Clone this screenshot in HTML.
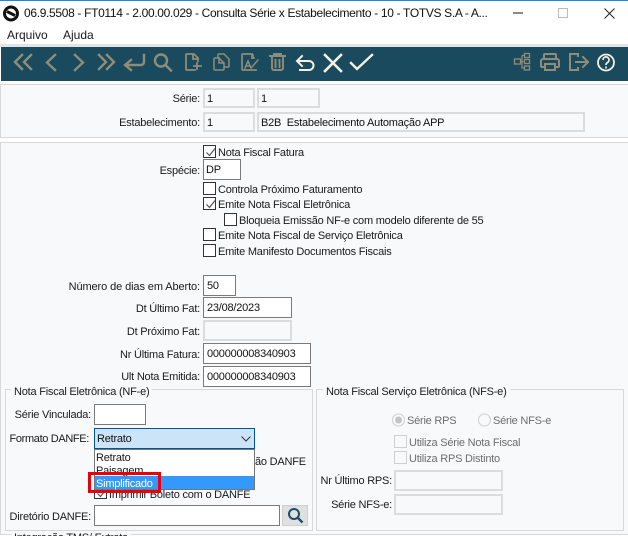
<!DOCTYPE html>
<html lang="pt"><head><meta charset="utf-8"><title>Consulta Série x Estabelecimento</title>
<style>
html,body{margin:0;padding:0;width:628px;height:536px;overflow:hidden;background:#fff}
#w{width:628px;height:536px;position:relative;overflow:hidden;background:#fff;font:11px "Liberation Sans",sans-serif;letter-spacing:-.22px;color:#1a1a1a}
.a{position:absolute;box-sizing:border-box}
.t{position:absolute;white-space:nowrap;line-height:14px;height:14px;margin-top:1px}
.r{text-align:right}
.f{position:absolute;box-sizing:border-box;background:#fff;border:1px solid #7a7a7a;padding:0 3px;line-height:20px;white-space:nowrap;overflow:hidden;color:#111}
.d{background:#f8f9fb;border:2px solid #dcdcdc;padding:0 2px;line-height:18px}
.c{position:absolute;box-sizing:border-box;width:13px;height:13px;border:1px solid #333;background:#fff}
.c.g{border-color:#cfcfcf;background:#f8f9fb}
.c svg{position:absolute;left:1px;top:1px}
.g1{color:#6d6d6d}
svg.i{position:absolute;left:0;top:0}
</style></head><body><div id="w">
<div class="a" style="left:0;top:0;width:628px;height:1px;background:#1e88d8"></div>
<svg class="i" width="24" height="26"><circle cx="11" cy="13.500" r="6.500" fill="none" stroke="#111" stroke-width="3"/><path d="M7 11.500l8 4" stroke="#111" stroke-width="3"/></svg>
<div class="t" style="left:24px;top:6px;margin-top:0;letter-spacing:-.33px;font-size:12px;color:#111">06.9.5508 - FT0114 - 2.00.00.029 - Consulta Série x Estabelecimento - 10 - TOTVS S.A - A...</div>
<svg class="i" width="628" height="30"><path d="M513 13h10" stroke="#111" stroke-width="1"/><rect x="558.500" y="8.500" width="9" height="9" fill="none" stroke="#bbb"/><path d="M604.500 8.500l10 10m0-10l-10 10" stroke="#222"/></svg>
<div class="t" style="left:7px;top:28px;margin-top:0;font-size:12px;letter-spacing:0">Arquivo</div>
<div class="t" style="left:63px;top:28px;margin-top:0;font-size:12px;letter-spacing:0">Ajuda</div>
<div class="a" style="left:0;top:44px;width:628px;height:3px;background:#e4e4e4"></div>
<div class="a" style="left:1px;top:47px;width:627px;height:34px;background:#194a5e"></div>
<svg class="i" width="628" height="84" fill="none" stroke-linecap="square">
<g stroke="#8f8d78" stroke-width="2.400">
<path d="M22 55l-7 7 7 7M31 55l-7 7 7 7"/>
<path d="M55 55l-8 7.500 8 7.500"/>
<path d="M75 55l8 7.500-8 7.500"/>
<path d="M99 55l7 7-7 7M107 55l7 7-7 7"/>
<path d="M144 55v7a3 3 0 0 1-3 3h-15M131 60l-6 5 6 5"/>
<circle cx="161" cy="60.500" r="6"/><path d="M166 65.500l5 5"/>
<path d="M198 61v-3l-4-4h-7a1 1 0 0 0-1 1v14a1 1 0 0 0 1 1h8M193 55v4h5M197 63v6M194 66h7" stroke-width="1.800"/>
<path d="M219 58h-4a1 1 0 0 0-1 1v10a1 1 0 0 0 1 1h8a1 1 0 0 0 1-1v-6zM219 58v5h5M218 57v-2a1 1 0 0 1 1-1h5l5 5v7a1 1 0 0 1-1 1h-4" stroke-width="1.500"/>
<path d="M253 56v-1l-1-1h-9a1 1 0 0 0-1 1v14a1 1 0 0 0 1 1h13M252 54v4h2" stroke-width="1.700"/>
<path d="M245 68l3-7 3 7M246 66h4M252 67l6-7" stroke-width="1.500"/>
<path d="M270 56h15M274 55v-1h7v1M272 58v10a2 2 0 0 0 2 2h7a2 2 0 0 0 2-2v-10M275.500 60v7M279.500 60v7" stroke-width="1.900"/>
</g>
<g stroke="#f5f1de" stroke-width="2.200">
<path d="M298 61h11a4 4 0 0 1 0 9h-9M302 56l-5 5 5 5" stroke-width="2"/>
<path d="M325 55l16 16m0-16l-16 16" stroke-width="2.600"/>
<path d="M351 63l6 6 15-14" stroke-width="2.400"/>
</g>
<g stroke="#8f8d78" stroke-width="1.800">
<path d="M520.500 61.500h3M522 55.500v13M522 55.500h2M522 68h2" stroke-width="1.200" stroke-linecap="butt"/>
<g stroke-width="1.300"><rect x="514.500" y="59" width="6" height="5"/><rect x="524.500" y="53.500" width="5" height="4"/><rect x="524.500" y="59.500" width="5" height="4"/><rect x="524.500" y="66" width="5" height="4"/></g>
<path d="M544 59v-4a1 1 0 0 1 1-1h10a1 1 0 0 1 1 1v4M544 67h-2a1 1 0 0 1-1-1v-5a2 2 0 0 1 2-2h14a2 2 0 0 1 2 2v5a1 1 0 0 1-1 1h-2M545 64h10v6h-10z" stroke-width="2"/>
<path d="M578 56v-2h-8v16h8v-2M576 62h12M583 57l5 5-5 5" stroke-width="2"/>
</g>
<circle cx="606" cy="62.500" r="8" stroke="#f5f1de" stroke-width="1.800"/>
<path d="M603 60a3 3 0 1 1 4.500 2.500c-1 .7-1.500 1-1.500 2.500" stroke="#f5f1de" stroke-width="1.700" stroke-linecap="butt"/><path d="M606 66.500v2" stroke="#f5f1de" stroke-width="1.700" stroke-linecap="butt"/>
</svg>

<!-- Panel 1 -->
<div class="a" style="left:0;top:84px;width:628px;height:54px;background:#f8f9fb;border:1px solid #d8d8d8;border-width:1px 0 1px 1px"></div>
<div class="t r" style="left:100px;width:100px;top:91px">Série:</div>
<div class="t r" style="left:100px;width:100px;top:115px">Estabelecimento:</div>
<div class="f d" style="left:203px;top:88px;width:52px;height:20px">1</div>
<div class="f d" style="left:257px;top:88px;width:63px;height:20px">1</div>
<div class="f d" style="left:203px;top:112px;width:52px;height:20px">1</div>
<div class="f d" style="left:257px;top:112px;width:328px;height:20px">B2B&nbsp; Estabelecimento Automação APP</div>

<!-- Panel 2 -->
<div class="a" style="left:0;top:142px;width:628px;height:392px;background:#f8f9fb;border-top:1px solid #d8d8d8;border-left:1px solid #d8d8d8"></div>
<div class="c" style="left:203px;top:145px"><svg width="11" height="11" fill="none"><path d="M1.500 5.500l3 3 5.500-7" stroke="#555" stroke-width="1.200"/></svg></div>
<div class="t" style="left:218px;top:145px">Nota Fiscal Fatura</div>
<div class="t r" style="left:100px;width:100px;top:163px">Espécie:</div>
<div class="f" style="left:203px;top:159px;width:38px;height:21px;padding-left:2px">DP</div>
<div class="c" style="left:203px;top:182px"></div><div class="t" style="left:218px;top:182px">Controla Próximo Faturamento</div>
<div class="c" style="left:203px;top:197px"><svg width="11" height="11" fill="none"><path d="M1.500 5.500l3 3 5.500-7" stroke="#555" stroke-width="1.200"/></svg></div><div class="t" style="left:218px;top:197px">Emite Nota Fiscal Eletrônica</div>
<div class="c" style="left:224px;top:213px"></div><div class="t" style="left:239px;top:213px">Bloqueia Emissão NF-e com modelo diferente de 55</div>
<div class="c" style="left:203px;top:228px"></div><div class="t" style="left:218px;top:228px">Emite Nota Fiscal de Serviço Eletrônica</div>
<div class="c" style="left:203px;top:244px"></div><div class="t" style="left:218px;top:244px">Emite Manifesto Documentos Fiscais</div>

<div class="t r" style="left:40px;width:160px;top:279px;letter-spacing:-.1px">Número de dias em Aberto:</div>
<div class="f" style="left:203px;top:275px;width:33px;height:21px">50</div>
<div class="t r" style="left:40px;width:160px;top:301px">Dt Último Fat:</div>
<div class="f" style="left:203px;top:297px;width:89px;height:21px">23/08/2023</div>
<div class="t r" style="left:40px;width:160px;top:324px">Dt Próximo Fat:</div>
<div class="f d" style="left:203px;top:320px;width:89px;height:21px"></div>
<div class="t r" style="left:40px;width:160px;top:347px">Nr Última Fatura:</div>
<div class="f" style="left:203px;top:343px;width:108px;height:21px">000000008340903</div>
<div class="t r" style="left:40px;width:160px;top:369px">Ult Nota Emitida:</div>
<div class="f" style="left:203px;top:366px;width:108px;height:21px">000000008340903</div>

<!-- NF-e group -->
<div class="a" style="left:5px;top:389px;width:308px;height:142px;border:1px solid #d8d8d8"></div>
<div class="t" style="left:11px;top:384px;padding:0 3px;background:#f8f9fb">Nota Fiscal Eletrônica (NF-e)</div>
<div class="t r" style="left:10px;width:81px;top:407px">Série Vinculada:</div>
<div class="f" style="left:94px;top:404px;width:52px;height:21px"></div>
<div class="t r" style="left:5px;width:84px;top:431px;letter-spacing:-.35px">Formato DANFE:</div>
<div class="t" style="left:255px;top:454px">ão DANFE</div>
<div class="t" style="left:109px;top:487px">Imprimir Boleto com o DANFE</div>
<div class="c" style="left:94px;top:486px"><svg width="11" height="11" fill="none"><path d="M1.500 5.500l3 3 5.500-7" stroke="#555" stroke-width="1.200"/></svg></div>
<div class="f" style="left:94px;top:428px;width:161px;height:21px;background:#cce4f7;border-color:#005499;padding-left:2px">Retrato</div>
<svg class="i" width="628" height="536" fill="none" style="pointer-events:none"><path d="M241.500 436.500l4.500 4.500 4.500-4.500" stroke="#333"/></svg>
<div class="a" style="left:94px;top:449px;width:161px;height:41px;background:#fff;border:1px solid #767676"></div>
<div class="t" style="left:96px;top:450px">Retrato</div>
<div class="t" style="left:96px;top:463px">Paisagem</div>
<div class="a" style="left:95px;top:476px;width:159px;height:13px;background:#3399ff"></div>
<div class="t" style="left:96px;top:476px;color:#fff">Simplificado</div>
<div class="a" style="left:88px;top:472px;width:73px;height:21px;border:3px solid #e8000d"></div>
<div class="t r" style="left:5px;width:86px;top:509px">Diretório DANFE:</div>
<div class="f" style="left:94px;top:505px;width:186px;height:21px"></div>
<div class="a" style="left:282px;top:505px;width:26px;height:21px;background:#e0e0e0;border:1px solid #cfcfcf"></div>
<svg class="i" width="628" height="536" fill="none"><circle cx="294" cy="514" r="5" stroke="#1c4f66" stroke-width="2"/><path d="M298 518l4.500 4.500" stroke="#1c4f66" stroke-width="2.400"/></svg>

<!-- NFS-e group -->
<div class="a" style="left:316px;top:389px;width:308px;height:142px;border:1px solid #d8d8d8"></div>
<div class="t" style="left:323px;top:384px;padding:0 3px;background:#f8f9fb">Nota Fiscal Serviço Eletrônica (NFS-e)</div>
<svg class="i" width="628" height="536" fill="#f8f9fb"><circle cx="398.500" cy="420" r="6" stroke="#cfcfcf"/><circle cx="398.500" cy="420" r="3.500" fill="#c4c4c4"/><circle cx="484.500" cy="420" r="6" stroke="#cfcfcf"/></svg>
<div class="t g1" style="left:407px;top:413px">Série RPS</div>
<div class="t g1" style="left:493px;top:413px">Série NFS-e</div>
<div class="c g" style="left:394px;top:435px"></div><div class="t g1" style="left:409px;top:435px">Utiliza Série Nota Fiscal</div>
<div class="c g" style="left:394px;top:451px"></div><div class="t g1" style="left:409px;top:451px">Utiliza RPS Distinto</div>
<div class="t r" style="left:320px;width:72px;top:473px">Nr Último RPS:</div>
<div class="f d" style="left:394px;top:470px;width:109px;height:21px"></div>
<div class="t r" style="left:320px;width:72px;top:497px">Série NFS-e:</div>
<div class="f d" style="left:394px;top:494px;width:109px;height:21px"></div>

<!-- bottom cropped group -->
<div class="a" style="left:0;top:534px;width:628px;height:1px;background:#d8d8d8"></div>
<div class="t" style="left:11px;top:530px;padding:0 3px;background:#f8f9fb">Integração TMS/ Extrato</div>
</div></body></html>
